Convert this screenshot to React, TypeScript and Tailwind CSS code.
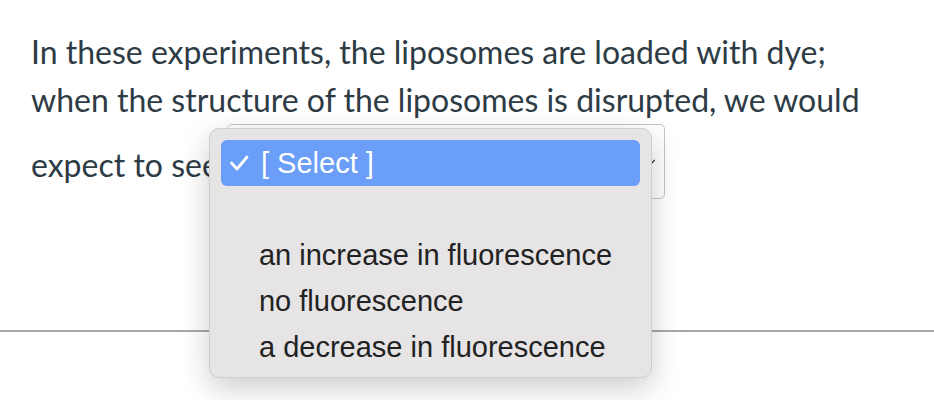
import { ChevronDown } from 'lucide-react';

const options = ['', 'an increase in fluorescence', 'no fluorescence', 'a decrease in fluorescence'];

function Check() {
  return (
    <svg width="20" height="16" viewBox="0 0 20 16" fill="none" className="shrink-0">
      <path d="M2.5 8 L8 14 L18 2" stroke="white" strokeWidth="2.8" strokeLinecap="round" strokeLinejoin="round" />
    </svg>
  );
}

export default function App() {
  return (
    <div className="w-[934px] h-[400px] bg-white overflow-hidden">
      <div className="pt-[28px] pl-[31px] w-[885px]">
        <p className="text-[32px] leading-[48px] text-[#2d3b45] font-['Lato',sans-serif]">
          In these experiments, the liposomes are loaded with dye; when the structure of the liposomes is disrupted, we would expect to see{' '}
          <span className="relative inline-block align-[-22px] w-[438px] h-[75px] border border-[#c4c4c4] rounded-[5px] bg-white">
            <ChevronDown size={14} strokeWidth={2} className="absolute right-[6px] top-[30px] text-[#333]" />
            {/* open dropdown menu */}
            <span className="absolute -left-[19px] top-[3px] w-[443px] pt-[11px] pb-[7px] px-[11px] rounded-[10px] bg-[#e6e4e5] border border-[#cfcdce] shadow-[0_10px_30px_rgba(0,0,0,0.2)] font-['Liberation_Sans',Arial,sans-serif] text-[29px] text-[#222] flex flex-col">
              <span className="flex items-center h-[46px] rounded-[6px] bg-[#6a9ef8] text-white pl-[8px] gap-[12px]">
                <Check />
                <span>[ Select ]</span>
              </span>
              {options.map((o, i) => (
                <span key={i} className="flex items-center h-[46px] pl-[38px] whitespace-nowrap">
                  {o}
                </span>
              ))}
            </span>
          </span>
        </p>
      </div>
      <hr className="mt-[131px] border-0 h-[2px] bg-[#a8a8a8]" />
    </div>
  );
}
